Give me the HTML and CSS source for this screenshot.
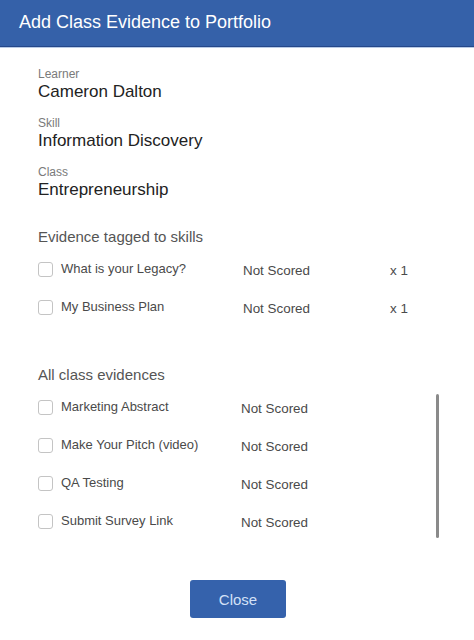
FILE: index.html
```html
<!DOCTYPE html>
<html>
<head>
<meta charset="utf-8">
<link rel="stylesheet" href="styles.css">
</head>
<body>
<div class="modal">
  <header class="header">Add Class Evidence to Portfolio</header>
  <main class="content">
    <div class="field">
      <div class="label">Learner</div>
      <div class="value">Cameron Dalton</div>
    </div>
    <div class="field">
      <div class="label">Skill</div>
      <div class="value">Information Discovery</div>
    </div>
    <div class="field">
      <div class="label">Class</div>
      <div class="value">Entrepreneurship</div>
    </div>

    <section class="section">
      <h2 class="section-title">Evidence tagged to skills</h2>
      <div class="rows tagged">
        <div class="row"><span class="box"></span><span class="name">What is your Legacy?</span><span class="score">Not Scored</span><span class="count">x 1</span></div>
        <div class="row"><span class="box"></span><span class="name">My Business Plan</span><span class="score">Not Scored</span><span class="count">x 1</span></div>
      </div>
    </section>

    <section class="section all">
      <h2 class="section-title">All class evidences</h2>
      <div class="rows scroll">
        <div class="row"><span class="box"></span><span class="name">Marketing Abstract</span><span class="score">Not Scored</span></div>
        <div class="row"><span class="box"></span><span class="name">Make Your Pitch (video)</span><span class="score">Not Scored</span></div>
        <div class="row"><span class="box"></span><span class="name">QA Testing</span><span class="score">Not Scored</span></div>
        <div class="row"><span class="box"></span><span class="name">Submit Survey Link</span><span class="score">Not Scored</span></div>
        <div class="scrollbar"></div>
      </div>
    </section>

    <div class="actions">
      <button class="btn">Close</button>
    </div>
  </main>
</div>
</body>
</html>
```

FILE: styles.css
```css
* { box-sizing: border-box; }
html, body {
  margin: 0;
  padding: 0;
  background: #ffffff;
  font-family: "Liberation Sans", Arial, sans-serif;
}
.modal {
  width: 474px;
  height: 640px;
  display: flex;
  flex-direction: column;
}
.header {
  height: 47px;
  background: #3561a9;
  color: #ffffff;
  font-size: 18px;
  line-height: 45px;
  padding-left: 19px;
  border-bottom: 1px solid #25488a;
  box-shadow: 0 1px 0 #b9cbe6;
}
.content {
  padding: 20px 0 0 38px;
}
.field { margin-bottom: 14px; }
.label {
  font-size: 12px;
  line-height: 15px;
  color: #7a7a7a;
}
.value {
  font-size: 17px;
  line-height: 20px;
  color: #222222;
}
.section-title {
  margin: 0 0 5px 0;
  font-size: 15px;
  line-height: 18px;
  font-weight: normal;
  color: #555555;
}
.section { margin-top: 28px; }
.section.all { margin-top: 39px; }
.rows { position: relative; }
.row {
  display: grid;
  grid-template-columns: 23px 182px 147px auto;
  align-items: center;
  height: 38px;
  font-size: 13px;
  color: #4a4a4a;
}
.scroll .row { grid-template-columns: 23px 180px auto; }
.box {
  width: 15px;
  height: 15px;
  border: 1px solid #c4c4c4;
  border-radius: 3px;
  margin-top: -2px;
}
.name { padding-bottom: 4px; color: #4a4a4a; }
.score { color: #4a4a4a; font-size: 13.4px; }
.count { color: #4a4a4a; font-size: 13.4px; }
.scrollbar {
  position: absolute;
  left: 398px;
  top: 5px;
  width: 3px;
  height: 144px;
  background: #8a8a8a;
  border-radius: 2px;
}
.actions {
  display: flex;
  justify-content: center;
  margin-top: 39px;
  margin-left: -38px;
}
.btn {
  width: 96px;
  height: 38px;
  margin-left: 2px;
  background: #3562ac;
  border: none;
  border-radius: 3px;
  color: #d3e1f7;
  font-family: "Liberation Sans", Arial, sans-serif;
  font-size: 15px;
}
```
